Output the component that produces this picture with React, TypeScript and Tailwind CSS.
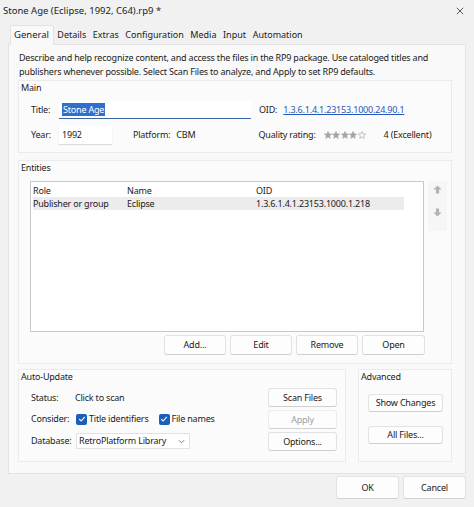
import React from "react";

const Btn = ({
  children,
  className = "",
  disabled = false,
}: {
  children: React.ReactNode;
  className?: string;
  disabled?: boolean;
}) => (
  <button
    className={`flex items-center justify-center whitespace-nowrap rounded-[3px] border border-[#e2e2e2] border-b-[#d0d0d0] bg-[#fdfdfd] ${
      disabled ? "text-[#a0a0a0] bg-[#f7f7f7] border-[#ececec]" : "text-[#1b1b1b]"
    } ${className}`}
  >
    {children}
  </button>
);

const Check = () => (
  <span className="flex h-[11px] w-[11px] items-center justify-center rounded-[2px] bg-[#1a5fb8]">
    <svg width="8" height="8" viewBox="0 0 8 8">
      <path d="M1.2 4.2 L3.1 6 L6.8 1.8" fill="none" stroke="white" strokeWidth="1.1" />
    </svg>
  </span>
);

const Arrow = ({ up }: { up?: boolean }) => (
  <svg width="9" height="9" viewBox="0 0 10 10" className={up ? "" : "rotate-180"}>
    <path d="M5 0.5 L9.5 5 L6.8 5 L6.8 9.5 L3.2 9.5 L3.2 5 L0.5 5 Z" fill="#b3b3b3" />
  </svg>
);

const Star = ({ filled }: { filled: boolean }) => (
  <svg width="8" height="8" viewBox="0 0 10 10">
    <path
      d="M5 0.6 L6.3 3.6 L9.5 3.8 L7 5.9 L7.8 9.2 L5 7.4 L2.2 9.2 L3 5.9 L0.5 3.8 L3.7 3.6 Z"
      fill={filled ? "#a3a3a3" : "none"}
      stroke="#a3a3a3"
      strokeWidth="0.8"
    />
  </svg>
);

export default function App() {
  const tabs = ["General", "Details", "Extras", "Configuration", "Media", "Input", "Automation"];
  return (
    <div
      className="relative h-[507px] w-[474px] overflow-hidden whitespace-nowrap bg-[#f1f1f1] text-[9px] tracking-[-0.2px] text-[#1b1b1b]"
      style={{ fontFamily: '"Noto Sans", "Open Sans", sans-serif' }}
    >
      {/* title bar */}
      <div className="flex h-[22px] items-center justify-between pl-[3px] pr-[10px] tracking-normal">
        <span className="text-[9.5px]">Stone Age (Eclipse, 1992, C64).rp9 *</span>
        <svg width="8" height="8" viewBox="0 0 10 10">
          <path d="M1 1 L9 9 M9 1 L1 9" stroke="#333" strokeWidth="1" />
        </svg>
      </div>

      {/* tabs */}
      <div className="flex h-[22px] items-end pl-[10px] tracking-normal">
        {tabs.map((t, i) =>
          i === 0 ? (
            <div
              key={t}
              className="relative z-10 -mb-px flex h-[20px] items-center rounded-t-[2px] border border-b-0 border-[#e3e3e3] bg-[#f9f9f9] pl-[3px] pr-[4px] text-[9.5px]"
            >
              {t}
            </div>
          ) : (
            <div key={t} className="flex h-[18px] items-center px-[3.3px]">
              {t}
            </div>
          )
        )}
      </div>

      {/* panel */}
      <div className="mx-[8px] flex h-[430px] flex-col border border-[#e3e3e3] bg-[#f9f9f9] pl-[9px] pr-[13px]">
        <p className="pt-[6px] pl-[1px] leading-[14px]">
          Describe and help recognize content, and access the files in the RP9 package. Use cataloged titles and
          <br />
          publishers whenever possible. Select Scan Files to analyze, and Apply to set RP9 defaults.
        </p>

        {/* Main */}
        <div className="mt-[1px] flex h-[73px] flex-col border border-[#ebebeb] bg-[#fbfbfb] pl-[2px]">
          <div className="h-[14px] leading-[14px]">Main</div>
          <div className="mt-[6px] flex h-[18px] items-center">
            <span className="w-[38px] pl-[10px]">Title:</span>
            <div className="flex h-[18px] w-[192px] items-center border-b border-[#3a66a8] bg-white pl-[3px]">
              <span className="bg-[#2f6fd0] px-[1px] text-white">Stone Age</span>
            </div>
            <span className="ml-[8px]">OID:</span>
            <span className="ml-[6px] text-[#2757b8] underline">1.3.6.1.4.1.23153.1000.24.90.1</span>
          </div>
          <div className="mt-[7px] flex h-[18px] items-center">
            <span className="w-[38px] pl-[10px]">Year:</span>
            <div className="flex h-[18px] w-[53px] items-center bg-white pl-[3px] shadow-[0_1px_1px_rgba(0,0,0,0.12)]">
              1992
            </div>
            <span className="ml-[21px]">Platform:</span>
            <span className="ml-[6px]">CBM</span>
            <span className="ml-[63px]">Quality rating:</span>
            <span className="ml-[8px] flex gap-[0.5px]">
              <Star filled />
              <Star filled />
              <Star filled />
              <Star filled />
              <Star filled={false} />
            </span>
            <span className="ml-[18px]">4 (Excellent)</span>
          </div>
        </div>

        {/* Entities */}
        <div className="mt-[7px] flex h-[204px] flex-col border border-[#ebebeb] bg-[#fbfbfb] pl-[2px]">
          <div className="h-[14px] leading-[14px]">Entities</div>
          <div className="mt-[6px] flex">
            <div className="ml-[9px] h-[151px] w-[394px] border border-[#c9c9c9] bg-white px-[2px] pt-[2px]">
              <div className="flex h-[13px] items-center">
                <span className="w-[94px]">Role</span>
                <span className="w-[129px]">Name</span>
                <span>OID</span>
              </div>
              <div className="flex h-[13px] w-[371px] items-center bg-[#ececec]">
                <span className="w-[94px]">Publisher or group</span>
                <span className="w-[129px]">Eclipse</span>
                <span>1.3.6.1.4.1.23153.1000.1.218</span>
              </div>
            </div>
            <div className="ml-[4px] flex h-[50px] w-[19px] flex-col items-center gap-[14px] bg-[#f6f6f6] pt-[4px]">
              <Arrow up />
              <Arrow />
            </div>
          </div>
          <div className="mt-[3px] flex gap-[4px] pl-[143px]">
            <Btn className="h-[20px] w-[62px]">Add...</Btn>
            <Btn className="h-[20px] w-[62px]">Edit</Btn>
            <Btn className="h-[20px] w-[62px]">Remove</Btn>
            <Btn className="h-[20px] w-[63px]">Open</Btn>
          </div>
        </div>

        {/* bottom groups */}
        <div className="mt-[5px] flex gap-[12px]">
          <div className="flex h-[93px] w-[328px] flex-col border border-[#ebebeb] bg-[#fbfbfb] pl-[2px]">
            <div className="h-[14px] leading-[14px]">Auto-Update</div>
            <div className="flex">
              <div className="flex w-[247px] flex-col pl-[10px]">
                <div className="mt-[6px] flex h-[16px] items-center">
                  <span className="w-[44px]">Status:</span>
                  <span>Click to scan</span>
                </div>
                <div className="mt-[5px] flex h-[16px] items-center">
                  <span className="w-[45px]">Consider:</span>
                  <Check />
                  <span className="ml-[2px]">Title identifiers</span>
                  <span className="ml-[10px]">
                    <Check />
                  </span>
                  <span className="ml-[2px]">File names</span>
                </div>
                <div className="mt-[6px] flex h-[16px] items-center">
                  <span className="w-[45px]">Database:</span>
                  <div className="flex h-[16px] w-[114px] items-center justify-between border border-[#e2e2e2] bg-white pl-[2px] pr-[4px]">
                    <span>RetroPlatform Library</span>
                    <svg width="7" height="5" viewBox="0 0 8 5">
                      <path d="M1 1 L4 4 L7 1" fill="none" stroke="#555" strokeWidth="0.9" />
                    </svg>
                  </div>
                </div>
              </div>
              <div className="flex flex-col gap-[3px] pt-[4px]">
                <Btn className="h-[19px] w-[69px]">Scan Files</Btn>
                <Btn className="h-[19px] w-[69px]" disabled>
                  Apply
                </Btn>
                <Btn className="h-[19px] w-[69px]">Options...</Btn>
              </div>
            </div>
          </div>
          <div className="flex h-[93px] w-[94px] flex-col border border-[#ebebeb] bg-[#fbfbfb] pl-[2px]">
            <div className="h-[14px] leading-[14px]">Advanced</div>
            <div className="flex flex-col gap-[14px] pl-[7px] pt-[10px]">
              <Btn className="h-[18px] w-[75px]">Show Changes</Btn>
              <Btn className="h-[18px] w-[75px]">All Files...</Btn>
            </div>
          </div>
        </div>
      </div>

      {/* dialog buttons */}
      <div className="flex justify-end gap-[4px] pr-[8px] pt-[2px]">
        <Btn className="h-[23px] w-[63px] border-[#4a7ac7] border-b-[#4a7ac7]">OK</Btn>
        <Btn className="h-[23px] w-[63px]">Cancel</Btn>
      </div>
    </div>
  );
}
